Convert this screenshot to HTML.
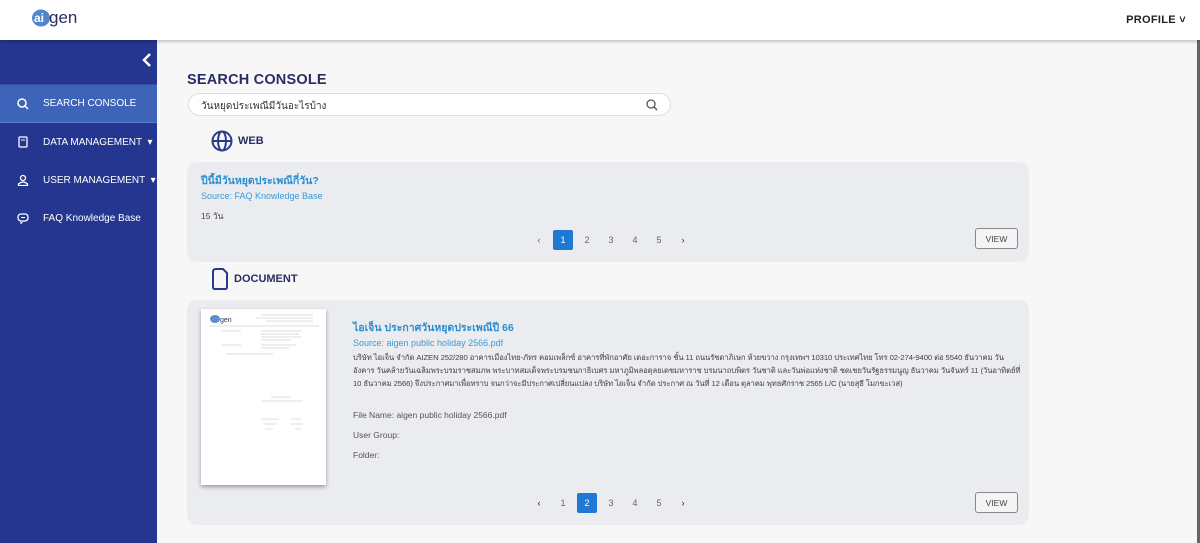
<!DOCTYPE html>
<html><head><meta charset="utf-8"><style>
*{box-sizing:border-box;margin:0;padding:0}
body{width:1200px;height:543px;overflow:hidden;font-family:"Liberation Sans",sans-serif;background:#f7f7f8;position:relative}
.top{position:absolute;left:0;top:0;width:1200px;height:40px;background:#fff;box-shadow:0 2px 3px rgba(0,0,0,.2);z-index:2}
.logo{position:absolute;left:30px;top:6px}
.prof{position:absolute;right:14px;top:14px;font-size:11px;font-weight:bold;color:#222;letter-spacing:.3px}
.side{position:absolute;left:0;top:40px;width:157px;height:503px;background:#24368f}
.side .hd{height:45px;border-bottom:1px solid #3a4ea0;position:relative}
.item{height:38px;display:flex;align-items:center;color:#fff;font-size:10px;padding-left:17px;position:relative}
.item.act{background:#3d64b9;border-bottom:1px solid #5a7cc8}
.item svg{margin-right:14px}
.main{position:absolute;left:157px;top:40px;right:0;bottom:0}
h1{position:absolute;left:30px;top:32px;font-size:14.5px;color:#2a2d63;letter-spacing:.2px}
.search{position:absolute;left:31px;top:53px;width:483px;height:23px;background:#fff;border:1px solid #ddd;border-radius:12px;font-size:10px;color:#333;padding:5px 0 0 12px}
.sec{position:absolute;left:54px;display:flex;align-items:center;font-weight:bold;font-size:11px;color:#2a2d63}
.card{position:absolute;left:30px;width:842px;background:#ebecef;border-radius:10px}
.t{color:#2a8fd0;font-weight:bold;font-size:10.5px}
.s{color:#3a9ad6;font-size:9px;margin-top:2px}
.pg{position:absolute;display:flex;align-items:center;font-size:9px;color:#666}
.pg span{width:20px;height:20px;display:inline-flex;align-items:center;justify-content:center;margin-right:4px}
.pg .on{background:#1e78d4;color:#fff;border-radius:2px}
.view{position:absolute;right:11px;width:43px;height:21px;border:1.5px solid #888;border-radius:3px;font-size:8.5px;color:#444;display:flex;align-items:center;justify-content:center;background:#f4f4f4}
.body{font-size:8.5px;color:#444;line-height:15.5px}
.meta{font-size:8.5px;color:#555}
</style></head><body>
<div class="top">
 <div class="logo"><svg width="56" height="30"><ellipse cx="11" cy="12" rx="9" ry="8.5" fill="#4f86cc"/><text x="4" y="16" font-family="Liberation Sans" font-size="12" fill="#fff" font-weight="bold">ai</text><text x="19" y="17" font-family="Liberation Sans" font-size="17" fill="#2a2d63">gen</text></svg></div>
 <div class="prof">PROFILE ˅</div>
</div>
<div class="side">
 <div class="hd"><svg style="position:absolute;right:5px;top:13px" width="10" height="14"><path d="M8 1 L2 7 L8 13" stroke="#fff" stroke-width="2.5" fill="none"/></svg></div>
 <div class="item act"><svg width="12" height="12"><circle cx="5" cy="5" r="4" stroke="#fff" stroke-width="1.5" fill="none"/><path d="M8 8L11 11" stroke="#fff" stroke-width="1.5"/></svg>SEARCH CONSOLE</div>
 <div class="item"><svg width="12" height="12"><rect x="2" y="1" width="8" height="10" rx="1" stroke="#fff" stroke-width="1.3" fill="none"/><path d="M4 4H8" stroke="#fff"/></svg>DATA MANAGEMENT &nbsp;▾</div>
 <div class="item"><svg width="12" height="12"><circle cx="6" cy="4" r="2.5" stroke="#fff" stroke-width="1.3" fill="none"/><path d="M1.5 11.5V10Q6 6 10.5 10V11.5Z" stroke="#fff" stroke-width="1.3" fill="none"/></svg>USER MANAGEMENT &nbsp;▾</div>
 <div class="item"><svg width="12" height="12"><rect x="1" y="2" width="10" height="7" rx="3" stroke="#fff" stroke-width="1.3" fill="none"/><path d="M4 9L4 11.5 6 9M4 5.5H8" stroke="#fff"/></svg>FAQ Knowledge Base</div>
</div>
<div class="main">
 <h1>SEARCH CONSOLE</h1>
 <div class="search">วันหยุดประเพณีมีวันอะไรบ้าง<svg style="position:absolute;right:12px;top:5px" width="12" height="12"><circle cx="5" cy="5" r="4" stroke="#555" stroke-width="1.3" fill="none"/><path d="M8 8L11 11" stroke="#555" stroke-width="1.3"/></svg></div>
 <div class="sec" style="top:90px"><svg width="22" height="22" style="margin-right:5px"><circle cx="11" cy="11" r="9.5" stroke="#2a3a8a" stroke-width="2" fill="none"/><ellipse cx="11" cy="11" rx="4" ry="9.5" stroke="#2a3a8a" stroke-width="2" fill="none"/><path d="M1.5 11H20.5" stroke="#2a3a8a" stroke-width="2"/></svg>WEB</div>
 <div class="card" style="top:122px;height:100px;padding:10px 14px">
  <div class="t">ปีนี้มีวันหยุดประเพณีกี่วัน?</div>
  <div class="s">Source: FAQ Knowledge Base</div>
  <div class="body" style="margin-top:8px">15 วัน</div>
  <div class="pg" style="left:342px;top:68px"><span>‹</span><span class="on">1</span><span>2</span><span>3</span><span>4</span><span>5</span><span style="color:#222">›</span></div>
  <div class="view" style="top:66px">VIEW</div>
 </div>
 <div class="sec" style="top:228px"><svg width="18" height="22" style="margin-right:5px"><path d="M2 4Q2 1 5 1H12L16 5V19Q16 21 14 21H4Q2 21 2 19Z" stroke="#2a3a8a" stroke-width="2" fill="none"/></svg>DOCUMENT</div>
 <div class="card" style="top:260px;height:225px">
  <div style="position:absolute;left:14px;top:9px;width:125px;height:176px;background:#fff;box-shadow:0 2px 4px rgba(0,0,0,.35)">
   <svg width="125" height="177"><ellipse cx="14" cy="10" rx="5" ry="4" fill="#5a8fd0"/><text x="19" y="13" font-size="7" fill="#2a2d63" font-family="Liberation Sans">gen</text>
   <g stroke="#bbb" stroke-width=".6"><path d="M60 6H112M55 9H112M65 12H112M8 17H118M20 22H40M60 22H100M60 25H98M60 28H100M60 31H90M20 36H40M60 36H95M60 39H88M25 45H72M70 88H90M60 92H102M60 110H78M90 110H100M62 115H75M90 115H102M64 120H72M94 120H100"/></g></svg>
  </div>
  <div style="position:absolute;left:166px;top:19px;width:672px">
   <div class="t">ไอเจ็น ประกาศวันหยุดประเพณีปี 66</div>
   <div class="s">Source: aigen public holiday 2566.pdf</div>
   <div class="body" style="margin-top:3px;font-size:7.7px;letter-spacing:-.1px;line-height:13px">บริษัท ไอเจ็น จำกัด AIZEN 252/280 อาคารเมืองไทย-ภัทร คอมเพล็กซ์ อาคารที่พักอาศัย เดอะการาจ ชั้น 11 ถนนรัชดาภิเษก ห้วยขวาง กรุงเทพฯ 10310 ประเทศไทย โทร 02-274-9400 ต่อ 5540 ธันวาคม วันอังคาร วันคล้ายวันเฉลิมพระบรมราชสมภพ พระบาทสมเด็จพระบรมชนกาธิเบศร มหาภูมิพลอดุลยเดชมหาราช บรมนาถบพิตร วันชาติ และวันพ่อแห่งชาติ ชดเชยวันรัฐธรรมนูญ ธันวาคม วันจันทร์ 11 (วันอาทิตย์ที่ 10 ธันวาคม 2566) จึงประกาศมาเพื่อทราบ จนกว่าจะมีประกาศเปลี่ยนแปลง บริษัท ไอเจ็น จำกัด ประกาศ ณ วันที่ 12 เดือน ตุลาคม พุทธศักราช 2565 L/C (นายสุธี โมกขะเวส)</div>
   <div class="meta" style="margin-top:20px">File Name: aigen public holiday 2566.pdf</div>
   <div class="meta" style="margin-top:10px">User Group:</div>
   <div class="meta" style="margin-top:10px">Folder:</div>
  </div>
  <div class="pg" style="left:342px;top:193px"><span style="color:#222">‹</span><span>1</span><span class="on">2</span><span>3</span><span>4</span><span>5</span><span style="color:#222">›</span></div>
  <div class="view" style="top:192px">VIEW</div>
 </div>
 <div style="position:absolute;right:0;top:0;width:3px;height:503px;background:#666"></div>
</div>
</body></html>
